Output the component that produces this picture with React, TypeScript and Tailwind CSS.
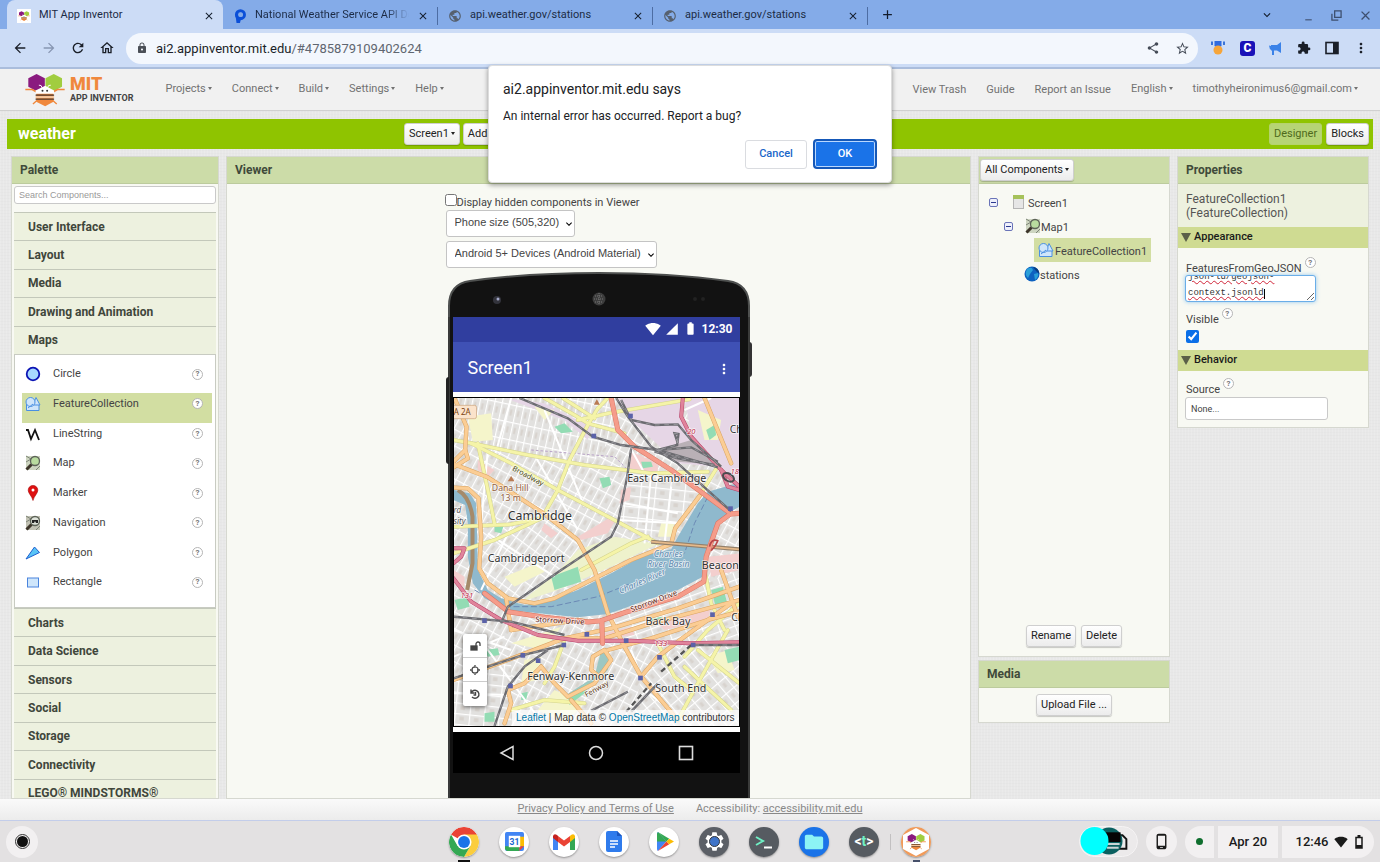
import { useEffect, useRef } from "react";
import type { ReactNode } from "react";
import {
  MdAdd,
  MdArrowBack,
  MdArrowForward,
  MdBatteryFull,
  MdClose,
  MdExpandMore,
  MdExtension,
  MdFilterNone,
  MdFolder,
  MdLock,
  MdMinimize,
  MdMoreVert,
  MdOutlineHome,
  MdOutlinePhoneAndroid,
  MdPublic,
  MdRefresh,
  MdSettings,
  MdShare,
  MdSignalCellular4Bar,
  MdSignalWifi4Bar,
  MdStarBorder,
} from "react-icons/md";

/* ---------- small drawings ---------- */

function BeeLogo({ className }: { className?: string }) {
  return (
    <svg viewBox="76 214 121 101" className={className} aria-hidden="true">
      <path d="M111 216 136 229V255L111 268 86 255V229Z" fill="#8a1a7f" />
      <path d="M163 216 188 229V255L163 268 138 255V229Z" fill="#a1cd3f" />
      <path d="M77 263H98L110 270M196 263H174L162 270" stroke="#f0883c" strokeWidth="5" fill="none" />
      <path d="M137 252 164 266V282H108V266Z" fill="#fff" />
      <path d="M118 250q8-2 10 8M154 250q-8-2-10 8" stroke="#fff" strokeWidth="3" fill="none" />
      <circle cx="129" cy="267" r="3" fill="#333" />
      <circle cx="143" cy="267" r="3" fill="#333" />
      <path d="M110 276H162V300L137 314 110 300Z" fill="#f0883c" />
      <path d="M108 280H164M108 292H164" stroke="#4a3a32" strokeWidth="4" />
      <path d="M108 286H164" stroke="#f7c9a0" strokeWidth="6" />
      <path d="M112 296 100 307M160 296 172 307" stroke="#f0883c" strokeWidth="4" />
    </svg>
  );
}

function FeatureIcon() {
  return (
    <svg viewBox="0 0 16 16" className="size-4" aria-hidden="true">
      <path d="M1.500 8V14.500H14V9" fill="#cfe6fb" stroke="#4a90e2" />
      <path d="M11 1.500 15 9H8Z" fill="#cfe6fb" stroke="#4a90e2" />
      <circle cx="5.500" cy="6" r="4.500" fill="#cfe6fb" stroke="#4a90e2" />
      <path d="M3 12 8 8" stroke="#4a90e2" />
    </svg>
  );
}

function MapIcon({ dark = false }: { dark?: boolean }) {
  return (
    <svg viewBox="0 0 16 16" className="size-4" aria-hidden="true">
      <rect x="1" y="1" width="14" height="14" fill={dark ? "#c2c2b4" : "#cdd5c0"} />
      <path d="M1 1 6 4 1 7M9 1V5M11 15 15 11" stroke="#7d8477" fill="none" />
      <circle cx="10" cy="6" r="4.500" fill={dark ? "#dfe3da" : "#b9dc9f"} stroke="#5d6358" strokeWidth="1.300" />
      {dark && <path d="M7 5H13V8H11L10 6 9 8H7Z" fill="#222" />}
      <path d="M6.500 9.500 1.500 14.500" stroke="#3d352a" strokeWidth="3" />
    </svg>
  );
}

function paletteIcon(name: string): ReactNode {
  switch (name) {
    case "Circle":
      return (
        <svg viewBox="0 0 16 16" className="size-4">
          <circle cx="8" cy="8" r="6.300" fill="#a6d8ff" stroke="#0b13b4" strokeWidth="1.800" />
        </svg>
      );
    case "FeatureCollection":
      return <FeatureIcon />;
    case "LineString":
      return (
        <svg viewBox="0 0 16 16" className="size-4">
          <path d="M1 4H3L6 13 10 4 14 14" fill="none" stroke="#111" strokeWidth="1.800" />
        </svg>
      );
    case "Map":
      return <MapIcon />;
    case "Marker":
      return (
        <svg viewBox="0 0 16 16" className="size-4">
          <path d="M8 15.500C7 11 3.200 8.500 3.200 5.200a4.800 4.800 0 0 1 9.600 0C12.800 8.500 9 11 8 15.500Z" fill="#de1010" stroke="#a80808" strokeWidth=".6" />
          <circle cx="8" cy="5" r="1.500" fill="#fff" />
        </svg>
      );
    case "Navigation":
      return <MapIcon dark />;
    case "Polygon":
      return (
        <svg viewBox="0 0 16 16" className="size-4">
          <path d="M9.500 2 14.500 7.500 1 14Z" fill="#58c4f6" stroke="#1d5fd0" />
        </svg>
      );
    default:
      return (
        <svg viewBox="0 0 16 16" className="size-4">
          <rect x="2.500" y="4" width="11" height="9" fill="#cfe6fb" stroke="#4a84dd" />
        </svg>
      );
  }
}

function HelpMark() {
  return (
    <span className="inline-flex size-[11px] shrink-0 items-center justify-center rounded-full border border-[#b5b5b5] bg-white text-[8px] leading-none font-bold text-[#777]">
      ?
    </span>
  );
}

function Collapse() {
  return (
    <button aria-label="Collapse" className="flex size-[9px] items-center justify-center rounded-[2px] border border-[#6a74b8] bg-[#eef0fb]">
      <span className="h-px w-[5px] bg-[#2c3a90]" />
    </button>
  );
}

/* ---------- map ---------- */

const yellowRoads = [
  "M27 150 80 160 200 220 340 300 500 385 640 460",
  "M80 160 250 195 420 225 620 250 790 245",
  "M300 370 340 300 375 210 430 105 460 55 490 24",
  "M300 24 390 75 430 100 540 130",
  "M400 90 500 68 735 28",
  "M355 24 450 85",
  "M27 490 150 450 290 385",
  "M27 410 200 403 290 385",
  "M822 225 765 318",
  "M410 540 560 460 610 440",
  "M720 800 790 720 885 640",
  "M700 990 760 880 850 720",
  "M360 750 330 830 300 880",
  "M720 830 860 960",
  "M760 780 885 880",
  "M100 160 130 300 150 400",
  "M640 760 690 860 740 900",
  "M780 540 800 640 840 720",
  "M200 960 300 930 420 940",
];
const orangeRoads = [
  "M27 222 130 262 300 372 400 450 450 540 490 670 540 770 590 860 700 990",
  "M30 24 66 110 62 180 27 215",
  "M27 232 70 205 62 180",
  "M780 24 860 220",
  "M27 293 70 295 102 325 110 440 104 535 130 580 190 625 270 640 330 625 450 565 560 510 680 462",
  "M680 462 692 415 765 318",
  "M27 870 190 810 360 745 500 715 700 655 885 590",
  "M350 745 480 745 620 700 885 630",
  "M490 780 620 745 790 690 885 665",
  "M200 720 185 625",
  "M290 830 330 880 370 920 450 880 500 810 480 780 445 800 440 840 470 865",
  "M190 900 240 880 290 830",
  "M180 1000 200 940 190 900",
  "M590 860 640 800 720 740 860 640",
  "M380 930 440 1000",
  "M200 720 400 690 430 695",
  "M830 540 880 680",
];
const redRoads = [
  "M500 24 520 120 570 170 680 240 860 372 885 370",
  "M190 665 300 682 430 696 470 692 540 668 700 620 778 575 785 500 820 400 860 370",
  "M472 692 474 760",
  "M185 660 120 610",
];
const motorways = [
  "M715 24 710 80 740 140 830 240 885 290",
  "M27 565 80 635 170 690 280 735 400 752 560 752 730 760 885 757",
  "M830 240 850 290 885 300",
  "M27 475 60 475 50 500 27 520",
];
const rails = [
  "M225 24 370 85 445 140 530 165 640 180 820 232",
  "M515 24 550 80 620 170 700 220 860 364",
  "M560 175 548 260 520 400 500 440 350 540 190 650 170 700",
  "M530 30 560 90 630 105 700 103 740 150 830 230",
  "M700 160 690 130 702 132 698 165 640 180",
  "M640 180 740 172 820 215",
  "M630 185 700 205 810 225",
  "M27 680 200 695 360 735",
  "M150 1008 190 890 240 830 310 780",
  "M27 865 235 795 360 765",
  "M440 962 550 905",
  "M560 965 640 880",
  "M750 765 885 765",
];

const greens = [
  "M330 110 360 100 385 125 350 130Z",
  "M465 265 495 260 500 285 475 295Z",
  "M785 120 810 105 815 135 795 150Z",
  "M320 560 400 530 410 575 330 600Z",
  "M120 780 160 775 165 795 130 800Z",
  "M370 920 430 880 420 910 375 945Z",
  "M120 970 150 965 150 995 120 995Z",
  "M150 405 180 400 170 430 150 425Z",
  "M610 690 650 680 660 695 620 705Z",
  "M800 600 835 590 850 645 815 655Z",
  "M30 630 70 620 75 650 40 660Z",
  "M230 910 250 905 245 930 230 930Z",
  "M590 215 620 215 625 230 595 235Z",
  "M840 780 885 770 885 810 850 820Z",
];
const yellows = [
  "M70 80 140 70 145 150 85 155Z",
  "M270 50 330 60 300 90Z",
  "M400 480 500 450 600 460 470 520 400 535Z",
  "M240 810 290 800 280 870 230 880Z",
  "M180 560 280 520 300 545 210 590Z",
  "M650 400 690 400 680 440 640 440Z",
  "M200 760 350 710 300 780Z",
  "M760 60 830 90 820 150 780 150Z",
  "M330 900 420 940 360 1000 280 960Z",
  "M790 800 850 780 870 840 820 850Z",
];
const pinks = [
  "M560 185 640 220 640 250 555 240Z",
  "M400 440 500 380 510 395 490 430 410 450Z",
  "M530 300 560 290 555 330 525 340Z",
  "M27 540 60 560 60 590 27 580Z",
  "M640 700 800 650 790 690 660 720Z",
  "M790 500 885 490 885 540 800 560Z",
  "M100 210 150 240 130 260 100 240Z",
  "M300 400 340 430 320 445 290 420Z",
  "M480 730 560 710 570 735 490 745Z",
];
const stations = [
  [448, 138], [558, 78], [858, 356], [427, 733], [545, 752], [358, 765], [235, 796],
  [281, 812], [198, 888], [588, 864], [645, 802], [746, 765], [804, 674], [120, 692],
];

type Label = { x: number; y: number; t: string; s: number; c?: string; i?: boolean; r?: number };
const labels: Label[] = [
  { x: 190, y: 391, t: "Cambridge", s: 37 },
  { x: 548, y: 275, t: "East Cambridge", s: 32 },
  { x: 130, y: 517, t: "Cambridgeport", s: 32 },
  { x: 772, y: 536, t: "Beacon Hill", s: 32 },
  { x: 603, y: 706, t: "Back Bay", s: 32 },
  { x: 248, y: 870, t: "Fenway-Kenmore", s: 32 },
  { x: 632, y: 906, t: "South End", s: 32 },
  { x: 856, y: 130, t: "Charlestown", s: 31 },
  { x: 860, y: 693, t: "Chinatown", s: 31 },
  { x: 142, y: 303, t: "Dana Hill", s: 26, c: "#93603e" },
  { x: 168, y: 334, t: "13 m", s: 26, c: "#93603e" },
  { x: 27, y: 368, t: "rd", s: 24, i: true, c: "#555" },
  { x: 27, y: 401, t: "sity", s: 24, i: true, c: "#555" },
  { x: 628, y: 502, t: "Charles", s: 26, i: true, c: "#5d88ae" },
  { x: 608, y: 532, t: "River Basin", s: 26, i: true, c: "#5d88ae" },
  { x: 528, y: 612, t: "Charles River", s: 26, i: true, c: "#5d88ae", r: -24 },
  { x: 202, y: 240, t: "Broadway", s: 22, c: "#4c4c10", r: 28 },
  { x: 272, y: 696, t: "Storrow Drive", s: 23, c: "#5c1c14", r: 3 },
  { x: 562, y: 667, t: "Storrow Drive", s: 23, c: "#5c1c14", r: -21 },
  { x: 426, y: 922, t: "Fenway", s: 22, c: "#5c3a14", r: -29 },
  { x: 48, y: 623, t: "131", s: 23, i: true, c: "#bd2f4c" },
  { x: 630, y: 769, t: "133", s: 23, i: true, c: "#bd2f4c" },
  { x: 728, y: 132, t: "20", s: 23, i: true, c: "#bd2f4c" },
  { x: 858, y: 252, t: "18", s: 23, i: true, c: "#bd2f4c" },
];

function RoadSet({ paths, casing, fill, w }: { paths: string[]; casing: string; fill: string; w: number }) {
  return (
    <g fill="none" strokeLinejoin="round" strokeLinecap="round">
      {paths.map((d) => (
        <path key={`c${d}`} d={d} stroke={casing} strokeWidth={w + 3} />
      ))}
      {paths.map((d) => (
        <path key={`f${d}`} d={d} stroke={fill} strokeWidth={w} />
      ))}
    </g>
  );
}

function StreetPattern({ id, w, h, angle }: { id: string; w: number; h: number; angle: number }) {
  return (
    <pattern id={id} width={w} height={h} patternUnits="userSpaceOnUse" patternTransform={`rotate(${angle})`}>
      <rect width={w} height={h} fill="#e2e1df" />
      <rect x={w * 0.35} y={h * 0.3} width={w * 0.3} height={h * 0.35} fill="#d8d3ce" />
      <path d={`M0 0H${w}M0 0V${h}`} stroke="#fff" strokeWidth="7" />
    </pattern>
  );
}

function CityMap() {
  return (
    <svg viewBox="27 24 858 984" preserveAspectRatio="xMidYMid slice" className="block h-[328px] w-full" role="img" aria-label="Map of Cambridge">
      <defs>
        <StreetPattern id="st-a" w={26} h={44} angle={28} />
        <StreetPattern id="st-b" w={22} h={52} angle={12} />
        <StreetPattern id="st-c" w={44} h={32} angle={6} />
        <StreetPattern id="st-d" w={24} h={46} angle={36} />
        <StreetPattern id="st-e" w={48} h={26} angle={-20} />
        <StreetPattern id="st-f" w={30} h={40} angle={-40} />
      </defs>
      <rect x="27" y="24" width="858" height="984" fill="url(#st-a)" />
      <path d="M27 24H500L520 120 440 225 80 160Z" fill="url(#st-b)" />
      <path d="M550 250 790 245 680 460 510 400Z" fill="url(#st-c)" />
      <path d="M110 400 300 372 420 470 350 545 200 640 105 540Z" fill="url(#st-d)" />
      <path d="M470 700 885 540V760H470Z" fill="url(#st-e)" />
      <path d="M590 860 730 760H885V1008H560Z" fill="url(#st-f)" />
      <path d="M27 870 200 810V1008H27Z" fill="url(#st-c)" />
      <path d="M520 24H712L710 90 820 230 700 220 560 90Z" fill="#e6d6e6" />
      <path d="M720 24H885V280L830 230 740 130Z" fill="#e6d6e6" />
      <path d="M180 24 300 40 440 110 430 150 360 90Z" fill="#e6d6e6" />
      <path d="M640 180 740 150 820 225 700 215Z" fill="#b9b0b6" />
      {yellows.map((d) => (
        <path key={d} d={d} fill="#f5f5cb" />
      ))}
      {pinks.map((d) => (
        <path key={d} d={d} fill="#f3cfce" />
      ))}
      <path d="M400 480 510 440 640 462 500 530 340 600 230 635 340 545Z" fill="#eef2cc" />
      <path
        d="M27 300 75 310 95 340 98 440 100 540 130 600 170 625 240 645 310 632 400 600 500 550 600 495 680 478 700 440 760 340 790 305 885 278V350L850 370 820 410 795 450 778 500 775 560 700 600 600 632 540 655 490 672 400 682 270 668 190 660 120 625 85 580 70 500V400L62 345 27 330Z"
        fill="#8fb9cd"
      />
      <path d="M470 780Q500 800 490 840L440 890 380 930 365 915 450 860Z" fill="#9cc7c2" />
      {greens.map((d) => (
        <path key={d} d={d} fill="#93dcb4" />
      ))}
      <path d="M90 600 180 650 320 650 460 620 560 580M790 320 750 400 720 490" fill="none" stroke="#6b89b5" strokeWidth="3" strokeDasharray="18 8" />
      <path d="M40 300Q75 320 84 380V520L68 600" fill="none" stroke="#a58a6a" strokeWidth="12" />
      <g stroke="#fff" strokeWidth="6" fill="none">
        <path d="M130 180 110 400M200 24 150 200M300 60 420 350M270 195 400 420M500 70 600 250M620 250 600 460M680 290 660 460M540 340 700 370M520 390 700 400M800 24 720 60M130 430 330 560M200 410 110 600M27 720 200 780M100 740 300 1008M27 910 190 915M27 800 180 740M560 780 590 860M600 900 740 1008" />
      </g>
      <path d="M260 180 510 200 570 260" fill="none" stroke="#b9a3c8" strokeWidth="3" strokeDasharray="8 6" />
      <RoadSet paths={yellowRoads} casing="#d3d38f" fill="#f5f4a8" w={9} />
      <RoadSet paths={orangeRoads} casing="#d9a463" fill="#fbcd94" w={10} />
      <path d="M620 455 885 478" stroke="#94806a" strokeWidth="12" />
      <path d="M620 455 885 478" stroke="#e5b98a" strokeWidth="5" />
      <RoadSet paths={motorways} casing="#b5436a" fill="#e0849b" w={9} />
      <RoadSet paths={redRoads} casing="#d87563" fill="#f59c8a" w={12} />
      <g fill="none">
        {rails.map((d) => (
          <path key={d} d={d} stroke="#6b6b70" strokeWidth="7" />
        ))}
        {rails.map((d) => (
          <path key={`d${d}`} d={d} stroke="#a9a9ad" strokeWidth="2" strokeDasharray="14 14" />
        ))}
        <path d="M545 965 620 880M650 845 740 765" stroke="#555" strokeWidth="7" strokeDasharray="16 10" />
        <ellipse cx="852" cy="262" rx="18" ry="11" transform="rotate(30 852 262)" stroke="#4b4b4f" strokeWidth="6" />
        <path d="M795 470q5-25 25-18-5 15-20 30" stroke="#b94848" strokeWidth="5" />
      </g>
      {stations.map(([x, y]) => (
        <rect key={`${x}-${y}`} x={x - 7} y={y - 7} width="14" height="14" fill="#5b62a8" />
      ))}
      <path d="M190 274 200 258 210 274ZM448 44 457 28 466 44Z" fill="#b97a52" />
      <rect x="20" y="46" width="76" height="40" rx="6" fill="#fbe3cb" stroke="#c9a079" strokeWidth="2" />
      <text x="28" y="75" fontSize="24" fill="#7a3f10" fontFamily="Noto Sans, sans-serif">A 2A</text>
      <g fontFamily="Noto Sans, sans-serif" stroke="#ffffff" strokeOpacity=".7" strokeWidth="5" strokeLinejoin="round" style={{ paintOrder: "stroke" }}>
        {labels.map((l) => (
          <text
            key={`${l.t}-${l.x}`}
            x={l.x}
            y={l.y}
            fontSize={l.s}
            fill={l.c ?? "#333"}
            fontStyle={l.i ? "italic" : "normal"}
            transform={l.r ? `rotate(${l.r} ${l.x} ${l.y})` : undefined}
          >
            {l.t}
          </text>
        ))}
      </g>
    </svg>
  );
}

/* ---------- browser chrome ---------- */

function BrowserTab({ title, icon, active = false, fade = false }: { title: string; icon: ReactNode; active?: boolean; fade?: boolean }) {
  return (
    <div
      className={
        active
          ? "flex h-full w-[216px] items-center gap-2 rounded-t-lg bg-[#ccdcf6] pt-[2px] pr-2 pl-[10px]"
          : "flex h-full w-[215px] items-center pt-[2px] pr-0 pl-[10px]"
      }
    >
      <div className={active ? "flex flex-1 items-center gap-2" : "flex h-[18px] min-w-0 flex-1 items-center gap-2 border-r border-[#4d6da3] pr-2"}>
        <span className="flex size-[14px] shrink-0 items-center justify-center">{icon}</span>
        <span
          className={
            fade
              ? "flex-1 overflow-hidden bg-linear-to-r from-[#1c2b45] from-85% to-transparent bg-clip-text text-[11px] whitespace-nowrap text-transparent"
              : "flex-1 overflow-hidden text-[11px] whitespace-nowrap text-[#1c2b45]"
          }
        >
          {title}
        </span>
        <button aria-label={`Close ${title}`} className="text-[#16202f]">
          <MdClose className="size-3" />
        </button>
      </div>
    </div>
  );
}

function BrowserChrome() {
  return (
    <header className="shrink-0">
      <div className="flex h-[29px] items-stretch justify-between bg-[#84abe8]">
        <div className="flex pl-[7px]">
          <BrowserTab active title="MIT App Inventor" icon={<span className="bg-white p-px"><BeeLogo className="size-3" /></span>} />
          <BrowserTab
            fade
            title="National Weather Service API Documentation"
            icon={
              <svg viewBox="0 0 16 16" className="size-[14px]">
                <circle cx="8.500" cy="6.500" r="4.500" fill="none" stroke="#0b4fd8" strokeWidth="3.600" />
                <path d="M3 8 4 16H8L9 11Z" fill="#0b4fd8" />
                <circle cx="9" cy="6.500" r="2.500" fill="#84abe8" />
              </svg>
            }
          />
          <BrowserTab title="api.weather.gov/stations" icon={<MdPublic className="size-[14px] text-[#56606e]" />} />
          <BrowserTab title="api.weather.gov/stations" icon={<MdPublic className="size-[14px] text-[#56606e]" />} />
          <button aria-label="New tab" className="px-3 text-[#131c2b]"><MdAdd className="size-[15px]" /></button>
        </div>
        <div className="flex items-center gap-4 pt-px pr-[7px] text-[#3d4f6e]">
          <button aria-label="Search tabs" className="mr-3 text-[#131c2b]"><MdExpandMore className="size-[14px]" /></button>
          <button aria-label="Minimize"><MdMinimize className="size-[13px]" /></button>
          <button aria-label="Restore">
            <svg viewBox="0 0 12 12" className="size-[11px]" fill="none" stroke="currentColor" strokeWidth="1.400">
              <path d="M4 1H11V8H4ZM1 4V11H8" />
            </svg>
          </button>
          <button aria-label="Close window"><MdClose className="size-[15px]" /></button>
        </div>
      </div>
      <div className="flex h-[40px] items-center border-b-2 border-[#aabddc] bg-[#ccdcf6] pr-[11px] pl-3 text-[#1a1f28]">
        <div className="flex items-center gap-[13px]">
          <button aria-label="Back"><MdArrowBack className="size-4" /></button>
          <button aria-label="Forward" className="text-[#8796b2]"><MdArrowForward className="size-4" /></button>
          <button aria-label="Reload"><MdRefresh className="size-4" /></button>
          <button aria-label="Home"><MdOutlineHome className="size-4" /></button>
        </div>
        <div className="ml-[11px] flex h-[31px] flex-1 items-center rounded-full bg-[#f3f7fd] pr-2 pl-[10px]">
          <MdLock className="size-3 text-[#4a4f57]" />
          <p className="flex-1 pt-px pl-2 text-[13px] leading-[18px] text-[#5f6670]">
            <span className="text-[#1a1f28]">ai2.appinventor.mit.edu</span>/#4785879109402624
          </p>
          <div className="flex gap-[15px] text-[#444b57]">
            <button aria-label="Share"><MdShare className="size-[14px]" /></button>
            <button aria-label="Bookmark"><MdStarBorder className="size-[15px]" /></button>
          </div>
        </div>
        <div className="ml-3 flex items-center gap-[14px]">
          <button aria-label="Medal extension">
            <svg viewBox="0 0 16 16" className="size-4">
              <path d="M1 1.500H3V5H1ZM13 1.500H15V5H13Z" fill="#3a74d8" />
              <path d="M4.500 1H11.500V6L8 8 4.500 6Z" fill="#2f6be0" />
              <circle cx="8" cy="10" r="4.500" fill="#f6a53a" />
            </svg>
          </button>
          <button aria-label="C extension" className="flex size-[15px] items-center justify-center rounded-[3px] bg-[#1a12b8] text-[12px] leading-none font-black text-white">C</button>
          <button aria-label="Announcements">
            <svg viewBox="0 0 14 16" className="h-4 w-[14px]" fill="#3b82e8">
              <path d="M12 2V13L8 10.500H5V15H3V10.500H2V5H8Z" />
              <path d="M0 5.500 2 6V9.500L1 9.500Z" />
            </svg>
          </button>
          <button aria-label="Extensions"><MdExtension className="size-[14px]" /></button>
          <button aria-label="Side panel">
            <svg viewBox="0 0 14 14" className="size-[14px]">
              <rect x="1" y="1.500" width="12" height="11" fill="none" stroke="#1a1f28" strokeWidth="1.600" />
              <rect x="8" y="1" width="5" height="12" fill="#1a1f28" />
            </svg>
          </button>
          <button aria-label="Menu"><MdMoreVert className="size-4" /></button>
        </div>
      </div>
    </header>
  );
}

/* ---------- app inventor ---------- */

function Caret() {
  return <span className="mb-px ml-[2px] inline-block border-x-2 border-t-[3px] border-x-transparent border-t-current align-middle" />;
}

function AppHeader() {
  return (
    <div className="flex h-[42px] shrink-0 items-center justify-between border-b border-[#d0d0d0] bg-[#f1f1f1] pr-[22px] pl-[25px] text-[11px] text-[#727272]">
      <div className="flex items-center">
        <a href="#home" className="flex items-center gap-[5px]">
          <BeeLogo className="h-[34px] w-10" />
          <span className="flex flex-col">
            <span className="text-[18px] leading-[18px] font-black text-[#f0883c]">MIT</span>
            <span className="text-[9px] leading-[11px] font-bold text-[#444]">APP INVENTOR</span>
          </span>
        </a>
        <nav className="ml-8 flex gap-[20px]">
          {["Projects", "Connect", "Build", "Settings", "Help"].map((m) => (
            <button key={m}>{m}<Caret /></button>
          ))}
        </nav>
      </div>
      <nav className="flex items-center gap-[20px]">
        {["View Trash", "Guide", "Report an Issue"].map((m) => (
          <a key={m} href="#link" className="pt-px">{m}</a>
        ))}
        <button>English<Caret /></button>
        <button>timothyheironimus6@gmail.com<Caret /></button>
      </nav>
    </div>
  );
}

const btn =
  "h-[22px] rounded-[3px] border border-[#cfcfcf] bg-linear-to-b from-white to-[#ececec] px-1 text-[11px] whitespace-nowrap text-[#222] shadow-[0_1px_1px_rgba(0,0,0,0.2)]";

function ProjectBar() {
  return (
    <div className="mx-[7px] mt-2 flex h-[30px] shrink-0 items-center bg-[#8fc400] pr-1 pl-[11px]">
      <h1 className="w-[386px] text-[16px] font-bold text-white">weather</h1>
      <div className="flex flex-1 gap-[3px]">
        <button className={btn}>Screen1<Caret /></button>
        <button className={btn}>Add Screen ...</button>
      </div>
      <div className="flex gap-1">
        <button className="h-[22px] rounded-[3px] border border-[#b5d36c] bg-[#b6d476] px-1 text-[11px] text-[#4f6a1c]">Designer</button>
        <button className={btn}>Blocks</button>
      </div>
    </div>
  );
}

const sectionHead = "flex h-[27px] shrink-0 items-center border-b border-[#bccb9d] bg-[#ccdca8] text-[12px] font-bold text-[#3f4a3a]";
const panel = "flex flex-col border border-[#d6d8d0] bg-[#f8f9f3]";

const paletteItems = ["Circle", "FeatureCollection", "LineString", "Map", "Marker", "Navigation", "Polygon", "Rectangle"];

function Category({ name }: { name: string }) {
  return (
    <button className="flex items-center border-t border-[#c3c8ba] bg-[#edf1df] pl-[14px] text-left text-[12px] font-bold text-[#40463b]">{name}</button>
  );
}

function Palette() {
  return (
    <section className={`${panel} min-h-0 overflow-hidden`}>
      <h2 className={`${sectionHead} pl-2`}>Palette</h2>
      <div className="px-[2px]">
        <input
          aria-label="Search Components"
          placeholder="Search Components..."
          className="mt-[2px] mb-2 block h-[18px] w-full rounded-[3px] border border-[#c9c9c9] bg-white px-1 font-['Liberation_Sans',sans-serif] text-[9px] placeholder:text-[#999]"
        />
        <div className="grid h-[142px] auto-rows-fr">
          {["User Interface", "Layout", "Media", "Drawing and Animation", "Maps"].map((c) => (
            <Category key={c} name={c} />
          ))}
        </div>
        <div className="border border-[#c8cbc2] bg-white pt-2 pr-[3px] pb-[6px] pl-[7px]">
          <ul className="grid h-[238px] auto-rows-fr">
            {paletteItems.map((p) => (
              <li
                key={p}
                className={
                  p === "FeatureCollection"
                    ? "flex items-start bg-[#d2dea2] pt-[3px] pr-[9px] pl-[3px] text-[11px] text-[#444]"
                    : "flex items-start pt-[3px] pr-[9px] pl-[3px] text-[11px] text-[#444]"
                }
              >
                {paletteIcon(p)}
                <span className="flex-1 pl-3 leading-4">{p}</span>
                <span className="flex h-4 items-center"><HelpMark /></span>
              </li>
            ))}
          </ul>
        </div>
        <div className="grid h-[199px] auto-rows-fr">
          {["Charts", "Data Science", "Sensors", "Social", "Storage", "Connectivity", "LEGO® MINDSTORMS®"].map((c) => (
            <Category key={c} name={c} />
          ))}
        </div>
      </div>
    </section>
  );
}

function Dropdown({ label, value }: { label: string; value: string }) {
  return (
    <div className="relative w-fit">
      <select
        aria-label={label}
        className="block h-[27px] appearance-none rounded-[3px] border border-[#c4c4c4] bg-white pr-[14px] pb-[2px] pl-2 font-['Liberation_Sans',sans-serif] text-[11px] text-[#444]"
      >
        <option>{value}</option>
      </select>
      <MdExpandMore className="pointer-events-none absolute top-2 right-0 size-3 text-black" />
    </div>
  );
}

function Phone() {
  return (
    <div className="relative mx-auto mt-1 w-[302px]">
      <span className="absolute top-[105px] -left-[2px] h-[87px] w-[3px] rounded-l bg-[#222]" />
      <span className="absolute top-[70px] -right-[2px] h-[35px] w-[3px] rounded-r bg-[#333]" />
      <svg viewBox="0 0 302 45" className="block h-[45px] w-full" aria-hidden="true">
        <path d="M1 46V34Q1 12 22 9 80 1 151 1T280 9Q301 12 301 34V46Z" fill="#121212" stroke="#4e504f" strokeWidth="2" />
        <rect x="2" y="43" width="298" height="4" fill="#121212" />
        <circle cx="49" cy="28" r="4" fill="#33343c" />
        <circle cx="50" cy="27" r="1.500" fill="#a3a8c8" />
        <circle cx="151" cy="27" r="6.500" fill="#3d3d3d" />
        <path d="M147 24H155M146 27H156M147 30H155M151 21V33" stroke="#777" strokeDasharray="1 1" />
        <circle cx="247" cy="27" r="2" fill="#222" />
        <circle cx="255" cy="27" r="2" fill="#222" />
      </svg>
      <div className="border-x-2 border-[#3a3b3a] bg-[#121212] pr-[8px] pb-10 pl-[3px]">
        <div className="flex h-[25px] items-center justify-end gap-1 bg-[#303e9f] pt-[-2px] pr-[7px] pb-[2px] text-[12px] font-bold text-white">
          <MdSignalWifi4Bar className="size-[16px]" />
          <MdSignalCellular4Bar className="size-[14px]" />
          <MdBatteryFull className="size-[15px]" />
          <span>12:30</span>
        </div>
        <div className="flex h-[50px] items-center justify-between bg-[#3f51b5] pr-2 pl-[15px] text-white">
          <span className="text-[18px]">Screen1</span>
          <MdMoreVert className="mt-1 size-4" />
        </div>
        <div className="bg-white py-[5px]">
          <div className="relative border border-black">
            <CityMap />
            <div className="absolute bottom-5 left-[9px] flex w-6 flex-col divide-y divide-[#ccc] rounded-[2px] bg-white text-[#444] shadow-[0_1px_4px_rgba(0,0,0,0.6)]">
              <button aria-label="Unlock" className="flex h-6 items-center justify-center">
                <svg viewBox="0 0 12 12" className="size-3" fill="none" stroke="currentColor" strokeWidth="1.300">
                  <rect x="2" y="6" width="6" height="4" fill="currentColor" />
                  <path d="M7 6V4A2 2 0 0 1 11 4V6" />
                </svg>
              </button>
              <button aria-label="Center" className="flex h-6 items-center justify-center">
                <svg viewBox="0 0 12 12" className="size-3" fill="none" stroke="currentColor" strokeWidth="1.300">
                  <circle cx="6" cy="6" r="3.200" strokeDasharray="3.400 1.626" strokeDashoffset="-.8" />
                  <path d="M6 1V4M6 8V11M1 6H4M8 6H11" />
                </svg>
              </button>
              <button aria-label="Reset" className="flex h-6 items-center justify-center">
                <svg viewBox="0 0 12 12" className="size-3" fill="none" stroke="currentColor" strokeWidth="1.400">
                  <path d="M2 1.500V5H5.500M2.200 4.800A4 4 0 1 1 3 9M6.500 4V7H4.500" />
                </svg>
              </button>
            </div>
            <div className="absolute right-0 bottom-0 bg-white/70 px-1 font-['Liberation_Sans',sans-serif] text-[10px] leading-[16px] whitespace-nowrap text-[#333]">
              <a href="#leaflet" className="text-[#0078a8]">Leaflet</a> | Map data © <a href="#osm" className="text-[#0078a8]">OpenStreetMap</a> contributors
            </div>
          </div>
        </div>
        <div className="flex h-[41px] items-center justify-between bg-black px-[46px]">
          <svg viewBox="0 0 16 16" className="size-4"><path d="M14 1.500V14.500L2 8Z" fill="none" stroke="#ddd" strokeWidth="1.500" /></svg>
          <svg viewBox="0 0 16 16" className="size-4"><circle cx="8" cy="8" r="6.500" fill="none" stroke="#ddd" strokeWidth="1.500" /></svg>
          <svg viewBox="0 0 16 16" className="size-4"><rect x="1.500" y="1.500" width="13" height="13" fill="none" stroke="#ddd" strokeWidth="1.600" /></svg>
        </div>
      </div>
    </div>
  );
}

function Viewer() {
  return (
    <section className={`${panel} min-h-0 overflow-hidden`}>
      <h2 className={`${sectionHead} pl-2`}>Viewer</h2>
      <div className="mx-auto w-[308px] pt-[10px]">
        <label className="flex h-4 items-start text-[11px] text-[#444]">
          <input type="checkbox" className="m-0 size-[12px]" />
          <span className="leading-[17px]">Display hidden components in Viewer</span>
        </label>
        <div className="flex flex-col gap-1 pl-px">
          <Dropdown label="Screen size" value="Phone size (505,320)" />
          <Dropdown label="Theme" value="Android 5+ Devices (Android Material)" />
        </div>
        <Phone />
      </div>
    </section>
  );
}

function Components() {
  return (
    <div className="flex flex-col gap-[3px]">
      <section className={`${panel} h-[501px]`}>
        <div className={`${sectionHead} pl-px font-normal`}>
          <button className={btn}>All Components<Caret /></button>
        </div>
        <ul className="flex-1 pt-[6px] text-[11px] text-[#444]">
          <li className="flex h-6 items-center gap-[15px] pl-[10px]">
            <Collapse />
            <span className="flex items-center gap-1">
              <svg viewBox="0 0 11 14" className="h-[14px] w-[11px]">
                <rect x=".5" y=".5" width="10" height="13" fill="#e6e6e6" stroke="#b5b5b5" />
                <rect width="11" height="4" fill="#a6c25a" />
              </svg>
              <span className="pt-1">Screen1</span>
            </span>
          </li>
          <li className="flex h-6 items-center gap-3 pl-[25px]">
            <Collapse />
            <span className="flex items-center">
              <MapIcon />
              <span className="pt-1">Map1</span>
            </span>
          </li>
          <li className="flex h-6 pl-[55px]">
            <span className="flex items-center gap-px bg-[#d2dea2] px-1">
              <FeatureIcon />
              <span className="pt-1">FeatureCollection1</span>
            </span>
          </li>
          <li className="flex h-6 items-center pl-[45px]">
            <svg viewBox="0 0 16 16" className="size-4">
              <circle cx="8" cy="8" r="7.500" fill="#0d62c0" />
              <path d="M3 3Q8 0 9 4L6 8 4 12Q0 9 3 3ZM10 8 14 7Q15 11 11 14Z" fill="#2a9fd8" />
              <path d="M9 1Q15 2 15.500 8L12 5Z" fill="#0a3c7e" />
            </svg>
            <span className="pt-1">stations</span>
          </li>
        </ul>
        <div className="mb-[9px] flex justify-center gap-[5px]">
          <button className={btn}>Rename</button>
          <button className={btn}>Delete</button>
        </div>
      </section>
      <section className={panel}>
        <h2 className={`${sectionHead} pl-2`}>Media</h2>
        <div className="flex justify-center py-[6px]">
          <button className={btn}>Upload File ...</button>
        </div>
      </section>
    </div>
  );
}

function Band({ title }: { title: string }) {
  return (
    <button className="flex h-[21px] w-full items-center gap-[3px] bg-[#cfdb92] pl-[3px] text-[11px] font-medium text-[#1a1a1a]">
      <svg viewBox="0 0 10 9" className="h-[9px] w-[10px]"><path d="M0 0H10L5 9Z" fill="#5b6048" /></svg>
      {title}
    </button>
  );
}

function PropLabel({ htmlFor, text }: { htmlFor: string; text: string }) {
  return (
    <div className="flex h-[18px] items-start gap-[3px] pl-px text-[11px] text-[#444]">
      <label htmlFor={htmlFor} className="pt-[5px] leading-[13px]">{text}</label>
      <HelpMark />
    </div>
  );
}

function Properties() {
  const geo = useRef<HTMLTextAreaElement>(null);
  useEffect(() => {
    if (geo.current) geo.current.scrollTop = geo.current.scrollHeight;
  }, []);
  return (
    <section className={`${panel} h-fit`}>
      <h2 className={`${sectionHead} pl-2`}>Properties</h2>
      <p className="h-[43px] bg-[#edf1df] pt-2 pl-2 text-[12px] leading-[14px] text-[#555]">
        FeatureCollection1
        <br />
        (FeatureCollection)
      </p>
      <Band title="Appearance" />
      <div className="px-[7px] pt-[9px] pb-[7px]">
        <PropLabel htmlFor="geojson" text="FeaturesFromGeoJSON" />
        <div className="relative h-[27px] w-[131px]">
          <textarea
            id="geojson"
            ref={geo}
            spellCheck={false}
            defaultValue={"json-ld/geojson-\ncontext.jsonld"}
            className="block h-full w-full resize overflow-hidden rounded-[3px] border border-[#6aaee8] bg-white px-[2px] font-['Liberation_Mono',monospace] text-[9px] leading-[16px] text-[#333] underline decoration-[#d0263a] decoration-wavy shadow-[0_0_4px_rgba(82,168,236,0.6)] outline-none"
          />
          <span className="absolute right-[51px] bottom-[3px] h-[10px] w-px bg-black" />
        </div>
        <div className="pt-[6px]">
          <PropLabel htmlFor="visible" text="Visible" />
        </div>
        <input id="visible" type="checkbox" defaultChecked className="m-0 mt-1 ml-px block size-[13px] accent-[#0b6fe8]" />
      </div>
      <Band title="Behavior" />
      <div className="px-[7px] pt-[7px] pb-[7px]">
        <PropLabel htmlFor="source" text="Source" />
        <input
          id="source"
          readOnly
          value="None..."
          className="mt-px block h-[23px] w-[143px] rounded-[3px] border border-[#c9c9c9] bg-white px-[5px] text-[9px] text-[#444]"
        />
      </div>
    </section>
  );
}

function Dialog() {
  return (
    <div role="dialog" aria-label="ai2.appinventor.mit.edu says" className="absolute top-[65px] left-1/2 w-[404px] -translate-x-1/2 rounded-[4px] border border-[#ddd] bg-white px-[14px] pt-[14px] pb-[13px] shadow-[0_2px_5px_rgba(0,0,0,0.4)]">
      <h2 className="text-[14px] leading-[18px] text-[#202124]">ai2.appinventor.mit.edu says</h2>
      <p className="mt-[10px] text-[12px] leading-[16px] text-[#202124]">An internal error has occurred. Report a bug?</p>
      <div className="mt-[15px] flex items-center justify-end gap-[6px] text-[11px] font-medium">
        <button className="h-[29px] w-[62px] rounded-[3px] border border-[#dadce0] text-[#1a67c9]">Cancel</button>
        <button className="h-[30px] w-[64px] rounded-[4px] border-2 border-[#1558b8] bg-[#1a73e8] text-white inset-ring inset-ring-[#b9d8ff]">OK</button>
      </div>
    </div>
  );
}

/* ---------- shelf ---------- */

function ShelfApp({ label, tone, children }: { label: string; tone: string; children: ReactNode }) {
  return (
    <button aria-label={label} className={`${tone} flex size-[30px] items-center justify-center overflow-hidden rounded-full shadow-[0_1px_2px_rgba(0,0,0,0.35)]`}>
      {children}
    </button>
  );
}

function Shelf() {
  return (
    <footer className="grid h-[41px] shrink-0 grid-cols-[1fr_auto_1fr] items-center bg-[#e3e1e2] pr-[6px] pl-[6px]">
      <button aria-label="Launcher" className="flex size-8 items-center justify-center rounded-full bg-[#f2f0f1]">
        <span className="flex size-[15px] items-center justify-center rounded-full border border-[#333]">
          <span className="size-[11px] rounded-full bg-[#111]" />
        </span>
      </button>
      <div className="flex items-center gap-[20px]">
        <div className="relative">
          <ShelfApp label="Chrome" tone="bg-white">
            <svg viewBox="0 0 48 48" className="size-[30px]">
              <path d="M24 24 3.200 12A24 24 0 0 1 44.800 12Z" fill="#ea4335" />
              <path d="M24 12H44.800A24 24 0 0 1 24 48L34.400 30Z" fill="#fbcd3d" />
              <path d="M3.200 12 13.600 30 34.400 30 24 48A24 24 0 0 1 3.200 12Z" fill="#34a853" />
              <circle cx="24" cy="24" r="12" fill="#fff" />
              <circle cx="24" cy="24" r="9.500" fill="#1a73e8" />
            </svg>
          </ShelfApp>
          <span className="absolute -bottom-[5px] left-[9px] h-[2px] w-3 bg-[#111]" />
        </div>
        <ShelfApp label="Calendar" tone="bg-white">
          <svg viewBox="0 0 20 20" className="size-[19px]">
            <rect width="20" height="20" rx="2" fill="#4285f4" />
            <path d="M15 5H20V15H15Z" fill="#fbbc04" />
            <path d="M5 15H15V20H2L0 18V15Z" fill="#34a853" />
            <path d="M15 15H20L15 20Z" fill="#ea4335" />
            <rect x="4" y="4" width="12" height="12" fill="#fff" />
            <text x="10" y="13.500" fontSize="9" fontWeight="700" textAnchor="middle" fill="#1967d2" fontFamily="Roboto, sans-serif">31</text>
          </svg>
        </ShelfApp>
        <ShelfApp label="Gmail" tone="bg-white">
          <svg viewBox="0 0 22 16" className="h-4 w-[22px]">
            <path d="M0 2V16H5V6Z" fill="#4285f4" />
            <path d="M22 2V16H17V6Z" fill="#34a853" />
            <path d="M5 2 11 6.500 17 2V8L11 12.500 5 8Z" fill="#ea4335" />
            <path d="M0 2Q1-1 4 1L5 2V8L0 4Z" fill="#c5221f" />
            <path d="M22 2Q21-1 18 1L17 2V8L22 4Z" fill="#fbbc04" />
          </svg>
        </ShelfApp>
        <ShelfApp label="Docs" tone="bg-white">
          <svg viewBox="0 0 16 21" className="h-[21px] w-4">
            <path d="M2 0H11L16 5V19Q16 21 14 21H2Q0 21 0 19V2Q0 0 2 0Z" fill="#2f7bec" />
            <path d="M11 0 16 5H11Z" fill="#1a56c0" />
            <path d="M4 10H12M4 13H12M4 16H9" stroke="#fff" strokeWidth="1.300" />
          </svg>
        </ShelfApp>
        <ShelfApp label="Play Store" tone="bg-white">
          <svg viewBox="0 0 18 20" className="ml-[3px] h-[19px] w-[17px]">
            <path d="M1 0 10 10 1 20Q0 19.500 0 18V2Q0 .5 1 0Z" fill="#4285f4" />
            <path d="M1 0 13 7 10 10Z" fill="#34a853" />
            <path d="M1 0 0 2V10L10 10Z" fill="#34a853" />
            <path d="M1 20 13 13 10 10Z" fill="#ea4335" />
            <path d="M13 7 18 10 13 13 10 10Z" fill="#fbbc04" />
          </svg>
        </ShelfApp>
        <ShelfApp label="Settings" tone="bg-[#5b5f66]">
          <span className="relative flex">
            <MdSettings className="size-[23px] text-white" />
            <span className="absolute top-[6px] left-[6px] size-[11px] rounded-full border border-[#33363b] bg-[#3f74c8]" />
          </span>
        </ShelfApp>
        <ShelfApp label="Terminal" tone="bg-[#565b61]">
          <svg viewBox="0 0 18 14" className="h-[14px] w-[18px]">
            <path d="M1 2 8 6 1 10" fill="none" stroke="#6ff0c4" strokeWidth="2" />
            <path d="M9 12.500H17" stroke="#fff" strokeWidth="2" />
          </svg>
        </ShelfApp>
        <ShelfApp label="Files" tone="bg-[#1a73e8]"><MdFolder className="size-[22px] text-[#8cf3f5]" /></ShelfApp>
        <ShelfApp label="Text" tone="bg-[#565b61]">
          <span className="font-['Roboto',sans-serif] text-[14px] font-bold text-white">&lt;<span className="text-[#6ff0c4]">t</span>&gt;</span>
        </ShelfApp>
        <div className="-ml-[9px] flex items-center gap-[10px]">
          <span className="h-4 w-px bg-[#c2c0c1]" />
          <div className="relative">
            <ShelfApp label="App Inventor" tone="bg-[#f3c9a4]">
              <svg viewBox="0 0 30 30" className="size-[30px]">
                <circle cx="15" cy="15" r="15" fill="#f09a5a" />
                <path d="M15 1 28 8V22L15 29 2 22V8Z" fill="#fff" />
                <svg x="5" y="6" width="20" height="18"><BeeLogo /></svg>
              </svg>
            </ShelfApp>
            <span className="absolute -bottom-[5px] left-3 h-[2px] w-[7px] bg-[#46506a]" />
          </div>
        </div>
      </div>
      <div className="flex items-center justify-end gap-2 text-[13px] font-medium text-[#1a1a1a]">
        <button aria-label="Recent files" className="relative flex h-[31px] w-[59px] items-center rounded-full border border-[#f5f3f4] bg-[#eceaeb]">
          <svg viewBox="0 0 59 31" className="h-[31px] w-[59px]">
            <path d="M40 9H44L48 13V23H40Z" fill="none" stroke="#111" strokeWidth="2" />
            <circle cx="30" cy="15" r="14" fill="#0b6060" />
            <rect x="26" y="6" width="16" height="10" fill="#050505" />
            <path d="M27 18H41M28 22H40" stroke="#c9d4d4" strokeWidth="2" />
            <circle cx="15" cy="15" r="14.500" fill="#00ffff" />
          </svg>
        </button>
        <button aria-label="Phone Hub" className="flex size-[31px] items-center justify-center rounded-full bg-[#f2f0f1]"><MdOutlinePhoneAndroid className="size-[17px]" /></button>
        <div className="flex h-[32px] gap-1">
          <span className="flex w-[29px] items-center justify-center rounded-l-full bg-[#f2f0f1]"><span className="size-[7px] rounded-full bg-[#0f6e2e]" /></span>
          <button className="w-[60px] bg-[#f2f0f1]">Apr 20</button>
          <button className="flex w-[92px] items-center justify-center gap-[6px] rounded-r-full bg-[#f2f0f1] pl-1">
            12:46
            <MdSignalWifi4Bar className="size-[14px]" />
            <svg viewBox="0 0 10 14" className="h-[14px] w-[10px]">
              <path d="M2 2.500H8V13H2Z" fill="none" stroke="#1a1a1a" strokeWidth="1.500" />
              <path d="M3.500 0H6.500V2H3.500ZM2 10H8V13H2Z" fill="#1a1a1a" />
            </svg>
          </button>
        </div>
      </div>
    </footer>
  );
}

export default function App() {
  return (
    <div className="relative flex h-screen flex-col overflow-hidden bg-[#e8e8e8] font-['Roboto',sans-serif]">
      <BrowserChrome />
      <AppHeader />
      <div className="flex min-h-0 flex-1 flex-col bg-[repeating-linear-gradient(0deg,rgba(0,0,0,0.012)_0_1px,transparent_1px_3px),repeating-linear-gradient(90deg,rgba(255,255,255,0.15)_0_1px,transparent_1px_3px)]">
        <ProjectBar />
        <main className="mt-[7px] grid min-h-0 flex-1 grid-cols-[208px_1fr_192px_192px] grid-rows-[minmax(0,1fr)] gap-x-[7px] overflow-hidden px-[11px]">
          <Palette />
          <Viewer />
          <Components />
          <Properties />
        </main>
      </div>
      <div className="flex h-[22px] shrink-0 items-center justify-center gap-[22px] border-b border-[#c3cdea] bg-linear-to-b from-[#fafafa] to-[#ececec] text-[11px] text-[#888]">
        <a href="#privacy" className="underline">Privacy Policy and Terms of Use</a>
        <span>Accessibility: <a href="#accessibility" className="underline">accessibility.mit.edu</a></span>
      </div>
      <Shelf />
      <Dialog />
    </div>
  );
}
